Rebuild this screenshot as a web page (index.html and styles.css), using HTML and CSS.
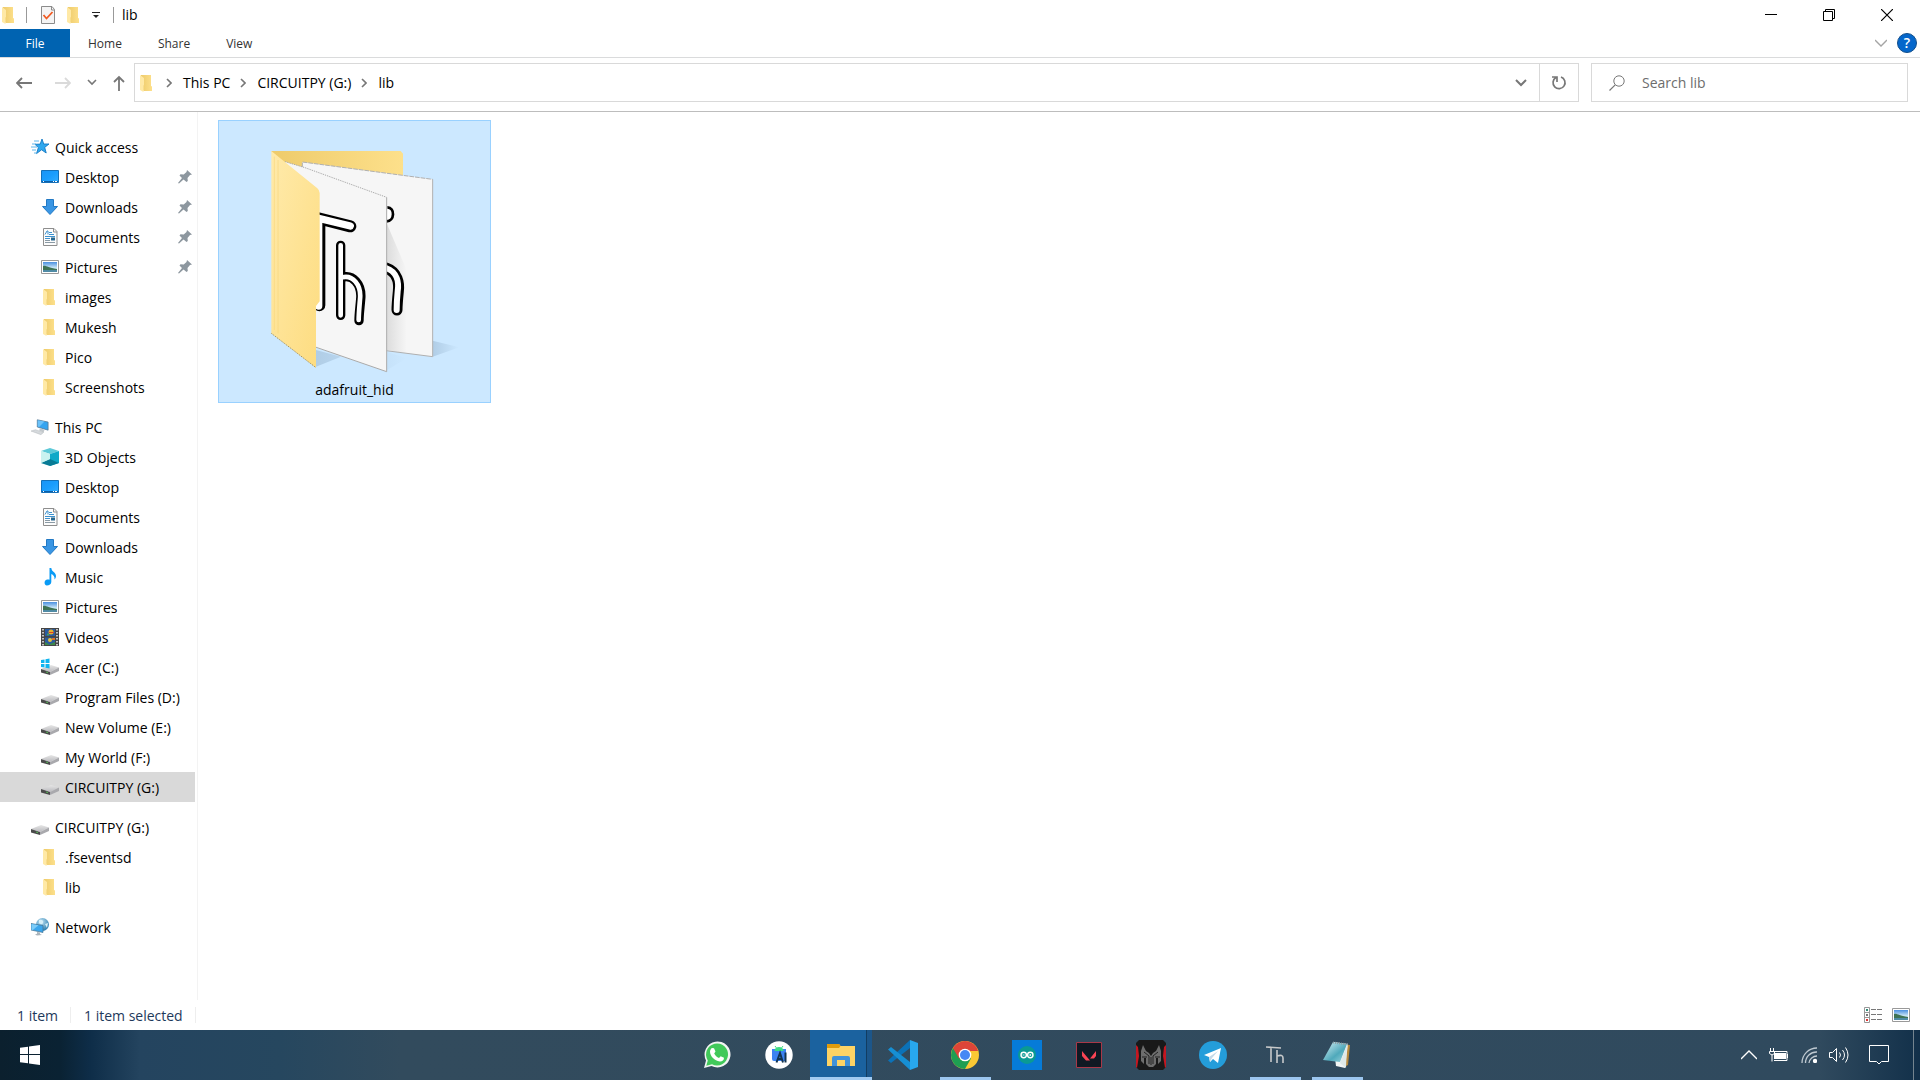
FILE: index.html
```html
<!DOCTYPE html>
<html lang="en">
<head>
<meta charset="utf-8">
<title>lib</title>
<link rel="stylesheet" href="styles.css">
</head>
<body>
<svg class="defs" aria-hidden="true">
  <defs>
    <linearGradient id="g-folder"><stop offset="0" stop-color="#eecb6b"/><stop offset="1" stop-color="#fde08b"/></linearGradient>
    <linearGradient id="g-desk" x2="1" y2="1"><stop offset="0" stop-color="#1a94f5"/><stop offset=".5" stop-color="#1a9dfd"/><stop offset="1" stop-color="#34adff"/></linearGradient>
    <linearGradient id="g-sky" x2="0" y2="1"><stop offset="0" stop-color="#4a8fe0"/><stop offset=".6" stop-color="#cfe9f7"/><stop offset="1" stop-color="#9cc7df"/></linearGradient>
    <linearGradient id="g-drive" x2="0" y2="1"><stop offset="0" stop-color="#e6e6e6"/><stop offset="1" stop-color="#b9b9bd"/></linearGradient>
    <linearGradient id="g-cover" x2="1" y2="1"><stop offset="0" stop-color="#ffeaaa"/><stop offset="1" stop-color="#fddc80"/></linearGradient>
    <linearGradient id="g-shade"><stop offset="0" stop-color="#d6d6d6"/><stop offset="1" stop-color="#f6f6f6"/></linearGradient>
    <linearGradient id="g-shadow"><stop offset="0" stop-color="#b0cde6"/><stop offset="1" stop-color="#cce8ff"/></linearGradient>
    <radialGradient id="g-globe" cx=".4" cy=".3" r=".7"><stop offset="0" stop-color="#bfe3f5"/><stop offset="1" stop-color="#2f7fae"/></radialGradient>
    <linearGradient id="g-note" x2="1" y2="1"><stop offset="0" stop-color="#d9f1f6"/><stop offset=".6" stop-color="#4fa9bb"/><stop offset="1" stop-color="#9fd6de"/></linearGradient>
  </defs>
  <symbol id="i-folder" viewBox="0 0 18 18">
    <path d="M3 1h10v11l1 .5V17H6L3 15z" fill="url(#g-folder)"/>
    <path d="M2 1l4 3v7l-.5.6V18L2 16z" fill="#ffe9a6"/>
  </symbol>
  <symbol id="i-star" viewBox="0 0 18 18">
    <path d="M11 1l1.700 5H18l-4.300 3.400L15.200 15 10.600 11.800 5.500 15.600 7.400 9.600 4 6.300l5.200-.2z" fill="#2fa8ee" stroke="#1479c4" stroke-width=".9"/>
    <path d="M3 3h5M1 6h4M0 9h6M1 12h4M3 15h3" stroke="#5fb5ea"/>
  </symbol>
  <symbol id="i-desktop" viewBox="0 0 18 18">
    <path d="M.5 2.500h17v12H.5z" fill="url(#g-desk)" stroke="#1570b8"/>
    <path d="M1 13.500h16" stroke="#0b5ea6"/><path d="M2 13.500h1M12 13.500h1M14 13.500h2" stroke="#fff"/>
  </symbol>
  <symbol id="i-down" viewBox="0 0 18 18">
    <path d="M5.500 1.500h7v7h4L9 16.500 1.500 8.500h4z" fill="#3a96e4" stroke="#2279c4"/>
  </symbol>
  <symbol id="i-doc" viewBox="0 0 18 18">
    <path d="M2.500.5H13l3 3v14H2.500z" fill="#fcfcfc" stroke="#8e8e8e"/><path d="M12.500 1v3H16" fill="none" stroke="#8e8e8e"/>
    <path d="M4 6.500L6 3h1v3.500M8 4.500h3M8 6.500h5M4 8.500h10M4 10.500h5" fill="none" stroke="#3c91ce"/>
    <path d="M4 12.500h5M4 14.500h10" stroke="#8a9aa5"/><path d="M10 9.500h4v3h-4z" fill="#27678f"/>
  </symbol>
  <symbol id="i-pic" viewBox="0 0 18 18">
    <path d="M.5 2.500h17v13H.5z" fill="#fff" stroke="#999"/>
    <path d="M2 4h14v10H2z" fill="url(#g-sky)"/><path d="M2 8c3-1 5 2 14 3v1H2z" fill="#3f7355"/><path d="M2 12h14v2H2z" fill="#4f8ba5"/>
  </symbol>
  <symbol id="i-pc" viewBox="0 0 20 18">
    <path d="M7 1l12 2.500v9L7 9z" fill="#34a4f0" stroke="#57738a" stroke-width=".8"/><path d="M7.500 1.500L15 3 9 9l-1.500-.5z" fill="#6bc2fa"/>
    <path d="M10 10.500l5 1.500-1 3-5-2z" fill="#c2c8cc"/><path d="M0 13.500l5-1.500 9 3-3 2.500z" fill="#d5d9dc" stroke="#adb3b8" stroke-width=".5"/>
  </symbol>
  <symbol id="i-cube" viewBox="0 0 18 18">
    <path d="M9 0l9 3-9 3-9-3z" fill="#5dc9d8"/><path d="M0 3l9 3v12l-9-3z" fill="#bdeeee"/><path d="M18 3L9 6v12l9-3z" fill="#10a9c8"/>
    <path d="M0 15l9-4 9 4-9 3z" fill="#087b95"/><path d="M0 3l9 3v5l-9 4z" fill="#c9f2f0"/>
  </symbol>
  <symbol id="i-music" viewBox="0 0 18 18">
    <path d="M8.500 0h1.800c.3 4 4.700 4 4.700 8 0 2-1 3-1.500 3.500.5-3-1.200-4.700-3.200-5.500v8c0 2-2 3.500-4.500 3.500S2.800 13 5 12c1.200-.6 2.500-.6 3.500-.2z" fill="#0a9bf5"/>
  </symbol>
  <symbol id="i-video" viewBox="0 0 18 18">
    <path d="M0 0h18v18H0z" fill="#454545"/><path d="M4 1h10v7H4zM4 9.500h10V17H4z" fill="#2b5b9e"/>
    <path d="M2 1v17M16 1v17" stroke="#eee" stroke-width="1.500" stroke-dasharray="1.500 1.500"/>
    <circle cx="10" cy="4" r="2.500" fill="#eab32b"/><path d="M8 4h5v1H8z" fill="#d5432d"/><circle cx="7" cy="6.500" r="1" fill="#4fb04a"/>
    <circle cx="9" cy="12" r="2" fill="#e5c33a"/><path d="M4 14l5 3H4zM9 16l5-2v3H9z" fill="#3d8948"/><path d="M11 10h3v2h-3z" fill="#d9722b"/>
  </symbol>
  <symbol id="i-drive" viewBox="0 0 18 18">
    <path d="M0 11l10-4 8 2.500-9 4.500z" fill="url(#g-drive)"/><path d="M0 11l9 3v3l-9-2.500z" fill="#4a4a4a"/><path d="M18 9.500v3.500L9 17v-3z" fill="#a9a9ad"/><path d="M5 14l2 .6" stroke="#59b359"/>
  </symbol>
  <symbol id="i-drivec" viewBox="0 0 18 18">
    <use href="#i-drive"/><path d="M0 2l3.500-.6V5H0zM4.500 1.200L8.500.5V5h-4zM0 6h3.500v3.600L0 9zM4.500 6h4v4.500l-4-.7z" fill="#10b5f0"/>
  </symbol>
  <symbol id="i-net" viewBox="0 0 18 18">
    <circle cx="11.500" cy="6.500" r="6.500" fill="url(#g-globe)"/><path d="M8 2c3-1 5 1 4 3s-3 1-4 0zM14 6l3-1-1 5z" fill="#d6eff8"/>
    <path d="M0 5.500l12 2v7L0 12z" fill="#3ba6ec" stroke="#43718f" stroke-width=".7"/><path d="M.5 6l7 1.200-6 5L.5 12z" fill="#7cccf8"/><path d="M6 14l3 .6v1.400l2 1-5 .5-2-1 2-.7z" fill="#aab4bb"/>
  </symbol>
  <symbol id="i-pin" viewBox="0 0 14 14">
    <path d="M9 0l5 4.500-2 .5-2.500 3 .3 3L8.500 12 5.500 9.500 1 13.500 0 13l4-5L1.500 5.500l1-1.200 3.200.2L8.500 2z" fill="#8d979f"/>
  </symbol>
  <symbol id="i-crumb" viewBox="0 0 6 10"><path d="M1 1l4 4-4 4" fill="none" stroke="#777" stroke-width="1.600"/></symbol>
</svg>

<div class="window">
  <header class="titlebar">
    <svg class="icon"><use href="#i-folder"/></svg>
    <span class="divider"></span>
    <button class="quick" aria-label="Properties"><svg width="18" height="18" viewBox="0 0 18 18"><path d="M2.500.5H13l2.500 3v14h-13z" fill="#f4f4f4" stroke="#8b8b8b"/><path d="M12.500 1v3h3" fill="none" stroke="#8b8b8b"/><path d="M4.500 9l3 3.500L13.500 6" fill="none" stroke="#f15a22" stroke-width="1.800"/></svg></button>
    <button class="quick" aria-label="New folder"><svg class="icon"><use href="#i-folder"/></svg></button>
    <button class="quick menu" aria-label="Customize toolbar"><svg width="8" height="8" viewBox="0 0 8 8"><path d="M0 1.500h8" stroke="#222"/><path d="M1 4h6L4 7z" fill="#222"/></svg></button>
    <span class="divider"></span>
    <h1 class="title">lib</h1>
    <button class="control" aria-label="Minimize"><svg width="12" height="12"><path d="M0 5.500h12" stroke="#000"/></svg></button>
    <button class="control" aria-label="Restore"><svg width="12" height="12" fill="none" stroke="#000"><path d="M.5 2.500h9v9h-9zM2.500 2V.5h9v9H10"/></svg></button>
    <button class="control" aria-label="Close"><svg width="12" height="12"><path d="M0 0l12 12M12 0L0 12" stroke="#000" stroke-width="1.200"/></svg></button>
  </header>

  <div class="ribbon">
    <button class="file-tab">File</button>
    <button class="tab">Home</button>
    <button class="tab">Share</button>
    <button class="tab">View</button>
    <button class="expand" aria-label="Expand ribbon"><svg width="12" height="8"><path d="M0 1l6 6 6-6" fill="none" stroke="#a5a5a5" stroke-width="1.400"/></svg></button>
    <button class="help" aria-label="Help">?</button>
  </div>

  <div class="navbar">
    <div class="history">
      <button class="back" aria-label="Back"><svg width="16" height="12"><path d="M16 6H1M6 1L1 6l5 5" fill="none" stroke="#777" stroke-width="1.800"/></svg></button>
      <button aria-label="Forward"><svg width="16" height="12"><path d="M0 6h15M10 1l5 5-5 5" fill="none" stroke="#dadada" stroke-width="1.800"/></svg></button>
      <button aria-label="Recent locations"><svg width="10" height="7"><path d="M1 1l4 4 4-4" fill="none" stroke="#777" stroke-width="1.600"/></svg></button>
      <button aria-label="Up"><svg width="12" height="16"><path d="M6 16V2M1 7l5-5 5 5" fill="none" stroke="#777" stroke-width="1.800"/></svg></button>
    </div>
    <div class="address">
      <svg class="icon"><use href="#i-folder"/></svg>
      <svg class="crumb"><use href="#i-crumb"/></svg><a href="#">This PC</a>
      <svg class="crumb"><use href="#i-crumb"/></svg><a href="#">CIRCUITPY (G:)</a>
      <svg class="crumb"><use href="#i-crumb"/></svg><a href="#">lib</a>
      <button class="drop" aria-label="Previous locations"><svg width="12" height="8"><path d="M1 1l5 5 5-5" fill="none" stroke="#777" stroke-width="2"/></svg></button>
      <button class="refresh" aria-label="Refresh"><svg width="16" height="16"><path d="M10 2a6 6 0 1 1-5 .5M1 2h5v5" fill="none" stroke="#777" stroke-width="1.700"/></svg></button>
    </div>
    <label class="search"><svg width="16" height="16"><circle cx="10" cy="6" r="5.200" fill="none" stroke="#777"/><path d="M6.200 9.800L.5 15.500" stroke="#777" stroke-width="1.200"/></svg><input type="text" placeholder="Search lib" aria-label="Search lib"></label>
  </div>

  <div class="body">
    <nav class="sidebar">
      <ul>
        <li><a class="row root" href="#"><svg class="icon"><use href="#i-star"/></svg>Quick access</a></li>
        <li><a class="row" href="#"><svg class="icon"><use href="#i-desktop"/></svg>Desktop<svg class="pin"><use href="#i-pin"/></svg></a></li>
        <li><a class="row" href="#"><svg class="icon"><use href="#i-down"/></svg>Downloads<svg class="pin"><use href="#i-pin"/></svg></a></li>
        <li><a class="row" href="#"><svg class="icon"><use href="#i-doc"/></svg>Documents<svg class="pin"><use href="#i-pin"/></svg></a></li>
        <li><a class="row" href="#"><svg class="icon"><use href="#i-pic"/></svg>Pictures<svg class="pin"><use href="#i-pin"/></svg></a></li>
        <li><a class="row" href="#"><svg class="icon"><use href="#i-folder"/></svg>images</a></li>
        <li><a class="row" href="#"><svg class="icon"><use href="#i-folder"/></svg>Mukesh</a></li>
        <li><a class="row" href="#"><svg class="icon"><use href="#i-folder"/></svg>Pico</a></li>
        <li><a class="row" href="#"><svg class="icon"><use href="#i-folder"/></svg>Screenshots</a></li>
      </ul>
      <ul>
        <li><a class="row root" href="#"><svg class="icon"><use href="#i-pc"/></svg>This PC</a></li>
        <li><a class="row" href="#"><svg class="icon"><use href="#i-cube"/></svg>3D Objects</a></li>
        <li><a class="row" href="#"><svg class="icon"><use href="#i-desktop"/></svg>Desktop</a></li>
        <li><a class="row" href="#"><svg class="icon"><use href="#i-doc"/></svg>Documents</a></li>
        <li><a class="row" href="#"><svg class="icon"><use href="#i-down"/></svg>Downloads</a></li>
        <li><a class="row" href="#"><svg class="icon"><use href="#i-music"/></svg>Music</a></li>
        <li><a class="row" href="#"><svg class="icon"><use href="#i-pic"/></svg>Pictures</a></li>
        <li><a class="row" href="#"><svg class="icon"><use href="#i-video"/></svg>Videos</a></li>
        <li><a class="row" href="#"><svg class="icon"><use href="#i-drivec"/></svg>Acer (C:)</a></li>
        <li><a class="row" href="#"><svg class="icon"><use href="#i-drive"/></svg>Program Files (D:)</a></li>
        <li><a class="row" href="#"><svg class="icon"><use href="#i-drive"/></svg>New Volume (E:)</a></li>
        <li><a class="row" href="#"><svg class="icon"><use href="#i-drive"/></svg>My World (F:)</a></li>
        <li><a class="row selected" href="#"><svg class="icon"><use href="#i-drive"/></svg>CIRCUITPY (G:)</a></li>
      </ul>
      <ul>
        <li><a class="row root" href="#"><svg class="icon"><use href="#i-drive"/></svg>CIRCUITPY (G:)</a></li>
        <li><a class="row" href="#"><svg class="icon"><use href="#i-folder"/></svg>.fseventsd</a></li>
        <li><a class="row" href="#"><svg class="icon"><use href="#i-folder"/></svg>lib</a></li>
      </ul>
      <ul>
        <li><a class="row root" href="#"><svg class="icon"><use href="#i-net"/></svg>Network</a></li>
      </ul>
    </nav>

    <main class="files">
      <a class="tile" href="#">
        <svg width="256" height="256" viewBox="51 33 768 768">
          <path d="M668 692l80 20-80 28z" fill="url(#g-shadow)"/><path d="M530 725l60 20-60 36zM318 720l75 20-75 30z" fill="url(#g-shadow)"/>
          <path d="M184 123h388l7 8v120H250z" fill="url(#g-folder)"/>
          <path d="M277 156l391 52v532l-391-54z" fill="#f6f6f6"/>
          <path d="M530 340l60 140v250l-60-10z" fill="url(#g-shade)" opacity=".8"/>
          <path d="M277 172v-16l391 52" fill="none" stroke="#b0b0b0" stroke-width="3" stroke-dasharray="14 3"/><path d="M668 208v532l-140-18" fill="none" stroke="#b0b0b0" stroke-width="3"/>
          <path d="M532 292c24 0 22 42-2 42" fill="#fff" stroke="#000" stroke-width="8"/>
          <path d="M528 474c35 12 40 45 37 70-2 20-4 40-4 56" fill="none" stroke="#000" stroke-width="33" stroke-linecap="round"/>
          <path d="M528 474c35 12 39 45 35 70-2 20-3 40-3 56" fill="none" stroke="#fff" stroke-width="18" stroke-linecap="round"/>
          <path d="M225 155l60 18 245 89v523l-245-84z" fill="#f6f6f6"/>
          <path d="M225 155l60 18 245 89" fill="none" stroke="#aaa" stroke-width="3" stroke-dasharray="4 3"/><path d="M530 262v523l-214-74" fill="none" stroke="#aaa" stroke-width="3"/>
          <g fill="none" stroke-linecap="round" stroke-linejoin="round">
            <path d="M310 321l111 28M328 340v246" stroke="#000" stroke-width="36"/><path d="M310 321l111 27M326 340v248" stroke="#fff" stroke-width="22"/>
            <path d="M392 406v210M397 502c30-10 60 20 55 66-2 24-5 45-5 64" stroke="#000" stroke-width="28"/><path d="M392 406v210M397 502c30-8 58 22 53 66-2 24-4 45-4 62" stroke="#fff" stroke-width="14"/>
          </g>
          <path d="M184 123l138 112q7 6 7 14v325l-11 14v185L184 670z" fill="url(#g-cover)"/>
          <path d="M193 140v520M204 150v520" stroke="#f8d67b" stroke-width="2"/><path d="M184 670l134 103" stroke="#a69563" stroke-width="3" stroke-dasharray="4 3"/>
        </svg>
        <span>adafruit_hid</span>
      </a>
    </main>
  </div>

  <footer class="status">
    <span class="count">1 item</span><span class="chosen">1 item selected</span>
    <button class="view" aria-label="Details view"><svg width="18" height="16"><path d="M.5.5h5v15h-5zM.5 5.500h5M.5 10.500h5" fill="none" stroke="#999"/><path d="M2 3h2" stroke="#2f8a77" stroke-width="2"/><path d="M2 8h2" stroke="#777" stroke-width="2"/><path d="M2 13h2" stroke="#d33" stroke-width="2"/><path d="M7 2.500h5M13 2.500h5M7 7.500h5M13 7.500h5M7 12.500h5M13 12.500h5" stroke="#777"/></svg></button>
    <button class="view" aria-label="Thumbnail view"><svg class="icon"><use href="#i-pic"/></svg></button>
  </footer>
</div>

<div class="taskbar">
  <button class="start" aria-label="Start"><svg width="20" height="20" fill="#fff"><path d="M0 2.800L8 1.700V9H0zM9 1.500L20 0v9H9zM0 10h8v8.300l-8-1.100zM9 10h11v10L9 18.500z"/></svg></button>
  <div class="apps">
    <button aria-label="WhatsApp"><svg width="28" height="28" viewBox="1 1 28 28"><path d="M2 28l2-7.500A13 13 0 1 1 9.500 26z" fill="#f2f4f3"/><path d="M4.300 25.700l1.500-5.300A11 11 0 1 1 10 24.200z" fill="#41c95a"/><path d="M10 8l2 .2 1.500 3.300-1.300 2c1.200 2.200 2.600 3.500 4.800 4.500l1.700-1.800 3.300 1.600c0 2.600-2 4-4.200 3.800-5.300-.8-9.600-5.200-9.800-9.800 0-1.700 1-3.200 2-3.800z" fill="#fff"/></svg></button>
    <button aria-label="Android Studio"><svg width="28" height="28" viewBox="0 0 28 28"><circle cx="14" cy="14" r="13.700" fill="#fff"/><path d="M7 8h14v12H9q-2 0-2-2z" fill="#3b82f0"/><path d="M9.500 10a4.500 4 0 0 1 9 0z" fill="#3ddc84"/><path d="M10 5l1.500 2M18 5l-1.500 2" stroke="#3ddc84"/><path d="M11.500 21.500L15 12l3 9.500M13 18h4M20.500 11.500v10" fill="none" stroke="#12344f" stroke-width="2"/></svg></button>
    <button class="active" aria-label="File Explorer"><svg width="28" height="24" viewBox="0 0 28 24"><path d="M0 1h12l1.500 2H28v20H0z" fill="#fdd365"/><path d="M0 1h12l1.500 2L12 5H0z" fill="#e09b0b"/><path d="M5 23V15q0-2 2-2h14q2 0 2 2v8h-5v-6h-8v6z" fill="#4192d9"/></svg></button>
    <button aria-label="Visual Studio Code"><svg width="30" height="30" viewBox="0 0 30 30"><path d="M22 8L3 23 0 20.500 22 0z" fill="#0b72b8"/><path d="M22 22L3 7 0 9.500 22 30z" fill="#168fd4"/><path d="M22 0l8 3v24l-8 3z" fill="#28a8ee"/></svg></button>
    <button class="open" aria-label="Chrome"><svg width="28" height="28" viewBox="0 0 28 28"><circle cx="14" cy="14" r="14" fill="#fbc934"/><path d="M14 14L1.900 7A14 14 0 0 0 14 28l6-10.500z" fill="#1e9e52"/><path d="M1.900 7a14 14 0 0 1 24.200 0H14v7L8 17.500z" fill="#dd4538"/><path d="M14 7h12l1 3H14z" fill="#dd4538"/><circle cx="14" cy="14" r="6.300" fill="#fff"/><circle cx="14" cy="14" r="5" fill="#4688f4"/></svg></button>
    <button aria-label="Arduino"><svg width="30" height="30" viewBox="0 0 30 30"><path d="M0 0h30v30H0z" fill="#067bd8"/><circle cx="15" cy="15" r="9" fill="#0a9a94"/><g fill="none" stroke="#fff" stroke-width="1.400"><circle cx="11.700" cy="15" r="2.700"/><circle cx="18.300" cy="15" r="2.700"/></g><path d="M10.500 15h2M17.300 15h2M18.300 14v2" stroke="#fff" stroke-width=".8"/></svg></button>
    <button aria-label="Valorant"><svg width="26" height="26"><path d="M.5.5h25v25H.5z" fill="#101923" stroke="#a93848"/><path d="M6 9l8 9.500H10L6 14zM20 9v5l-2 2.500h-4z" fill="#fa4454"/></svg></button>
    <button aria-label="PredatorSense"><svg width="30" height="30"><path d="M3 0h24l3 3v24l-3 3H3l-3-3V3z" fill="#191919"/><path d="M0 5l2 2 1 9-2 12-1-1zM30 5l-2 2-1 9 2 12 1-1z" fill="#c41721"/><path d="M7 5l3 6 3 2 2 3 2-3 3-2 3-6 2 6v10l-3 3v-6h-2v6l-3 3h-4l-3-3v-6H8v6l-3-3V11z" fill="#6d6d6d"/><path d="M8 12l5 4v8M22 12l-5 4v8M15 17v8M6 17h5M19 17h5" fill="none" stroke="#222"/></svg></button>
    <button aria-label="Telegram"><svg width="28" height="28"><circle cx="14" cy="14" r="14" fill="#249dda"/><path d="M5 14l17-7-3 15-5-4-3 3-1-5z" fill="#fff"/><path d="M10 16l9-6-6 7-2 4z" fill="#c5dae8"/></svg></button>
    <button class="open" aria-label="Thonny"><svg width="20" height="20" fill="none" stroke="#c7c9ca" stroke-width="1.600"><path d="M1 2l15 1M6 2v15M12 5v13M12 11q6-2 6 2v5"/></svg></button>
    <button class="open" aria-label="Notepad"><svg width="28" height="28" viewBox="0 0 28 28"><path d="M10 2l17 2-2 20-4 2z" fill="#b88a3d"/><path d="M10 1l15 2-3 24-9-2z" fill="#f2f5f4"/><path d="M10 1l14 2-7 18-17-2z" fill="url(#g-note)"/><path d="M10 1.500l15 2" stroke="#8d9ba0" stroke-width="2" stroke-dasharray="1 1"/><path d="M24 4l-7 18 6 5z" fill="#dfe9e8"/></svg></button>
  </div>
  <div class="tray">
    <button aria-label="Show hidden icons"><svg width="16" height="10"><path d="M0 9l8-8 8 8" fill="none" stroke="#fff" stroke-width="1.300"/></svg></button>
    <button aria-label="Battery"><svg width="20" height="14"><path d="M5 3.500h13v9H5M18.500 6v4M1.500 0v3M4.500 0v3M.5 3.500h5v2q-2.500 3-5 0zM3 7v6.500" fill="none" stroke="#fff"/><path d="M5 5h12v6H5z" fill="#fff"/></svg></button>
    <button aria-label="Network"><svg width="16" height="16" fill="none" stroke="#bfc9d1" stroke-width="1.300"><path d="M1 16A15 15 0 0 1 16 1M4.500 16A11 11 0 0 1 16 5M8 16A8 8 0 0 1 16 9"/><circle cx="14" cy="14" r="1.500" fill="#fff" stroke="#fff"/></svg></button>
    <button aria-label="Volume"><svg width="20" height="18" fill="none" stroke="#fff"><path d="M.5 6.500h3l4-4v13l-4-4h-3zM10.500 6.500q2 2.500 0 5M13.500 4q4 5 0 10M16.500 1.500q5 7.500 0 15"/></svg></button>
    <button class="notes" aria-label="Notifications"><svg width="20" height="20"><path d="M.5.500h19v16h-7L10 19l-2.500-2.500h-7z" fill="none" stroke="#fff"/></svg></button>
    <button class="peek" aria-label="Show desktop"></button>
  </div>
</div>
</body>
</html>
```
FILE: styles.css
```css
* { box-sizing: border-box; }
body {
  margin: 0;
  min-height: 100vh;
  display: flex;
  flex-direction: column;
  background: #fff;
  color: #000;
  font: 14px/20px "Open Sans", "Noto Sans", sans-serif;
}
button { padding: 0; border: 0; background: none; color: inherit; font: inherit; display: flex; align-items: center; justify-content: center; }
a { color: inherit; text-decoration: none; }
ul { margin: 0; padding: 0; list-style: none; }
svg { display: block; flex: none; }
.defs { position: absolute; width: 0; height: 0; }
.icon { width: 18px; height: 18px; }
.window { flex: 1; display: flex; flex-direction: column; }

.titlebar { height: 29px; display: flex; align-items: center; padding-right: 4px; }
.divider { width: 1px; height: 16px; margin: 0 8px; background: #999; }
.quick { width: 26px; height: 28px; }
.quick.menu { width: 18px; }
.title { flex: 1; margin: 0; font-size: 14px; font-weight: 400; }
.control { width: 58px; height: 28px; }

.ribbon { height: 29px; display: flex; border-bottom: 1px solid #dadbdc; padding-right: 3px; font-size: 12px; color: #333; align-items: center; }
.file-tab { width: 70px; height: 28px; padding-top: 2px; background: #0063b1; color: #fff; }
.tab { height: 28px; padding: 2px 18px 0; }
.expand { margin-left: auto; width: 32px; height: 28px; }
.help { width: 20px; height: 20px; border-radius: 50%; border: 1px solid #124f8c; background: #0567cb; color: #fff; font-size: 14px; font-weight: 600; }

.navbar { height: 54px; display: flex; padding: 5px 12px 9px 16px; border-bottom: 1px solid #bdbdbd; }
.history { display: flex; align-items: center; width: 118px; gap: 16px; }
.back { margin-right: 7px; }
.address { flex: 1; display: flex; align-items: center; border: 1px solid #d9d9d9; padding-left: 3px; }
.crumb { width: 6px; height: 10px; margin: 0 11px 0 10px; }
.drop { margin-left: auto; width: 36px; height: 100%; }
.refresh { width: 39px; height: 100%; border-left: 1px solid #d9d9d9; }
.search { width: 317px; margin-left: 12px; display: flex; align-items: center; gap: 17px; padding-left: 17px; border: 1px solid #d9d9d9; }
.search input { flex: 1; min-width: 0; border: 0; padding: 0; outline: 0; font: inherit; background: none; }
.search input::placeholder { color: #6d6d6d; opacity: 1; }

.body { flex: 1; display: flex; }
.sidebar { width: 198px; padding: 20px 2px 0 0; border-right: 1px solid #f3f3f3; }
.sidebar ul { margin-bottom: 10px; }
.row { display: flex; align-items: center; gap: 6px; height: 30px; padding: 2px 0 0 41px; white-space: nowrap; }
.row .icon { margin-bottom: 2px; }
.row.root { padding-left: 31px; }
.row.selected { background: #d9d9d9; }
.pin { width: 14px; height: 14px; margin: 0 3px 2px auto; }
.files { flex: 1; padding: 8px 20px; display: flex; align-items: flex-start; }
.tile { width: 273px; display: flex; flex-direction: column; align-items: center; background: #cce8ff; border: 1px solid #99d1ff; }
.tile span { line-height: 25px; }

.status { height: 30px; display: flex; align-items: center; padding: 0 10px 0 17px; color: #1e395b; }
.count, .chosen { padding: 2px 12px 0 0; border-right: 1px solid #eee; line-height: 14px; }
.chosen { padding-left: 13px; margin-right: auto; }
.view { margin-left: 10px; }

.taskbar {
  height: 50px;
  display: flex;
  background: linear-gradient(90deg, #0b202e 0, #0a2233 60px, #0e2d48 90px, #24445f 140px, #26475f 280px, #324b5d 400px, #304a5e calc(100% - 100px), #12304a 100%);
}
.start { width: 60px; }
.apps { display: flex; flex: 1; justify-content: center; padding-left: 253px; }
.apps button { width: 62px; padding-top: 2px; border-bottom: 3px solid transparent; position: relative; }
.apps .active { background: linear-gradient(90deg, #1b629f 56px, #123d62 56px, #123d62 57px, #1c568a 57px); border-bottom-color: #a2cbf2; }
.apps .open::after { content: ""; position: absolute; left: 6px; right: 5px; bottom: -3px; height: 3px; background: #9cc6ef; }
.tray { display: flex; align-items: center; gap: 12px; }
.tray .notes { margin-left: 8px; }
.peek { align-self: stretch; width: 7px; margin-left: 12px; border-left: 1px solid #74848f; }
```
